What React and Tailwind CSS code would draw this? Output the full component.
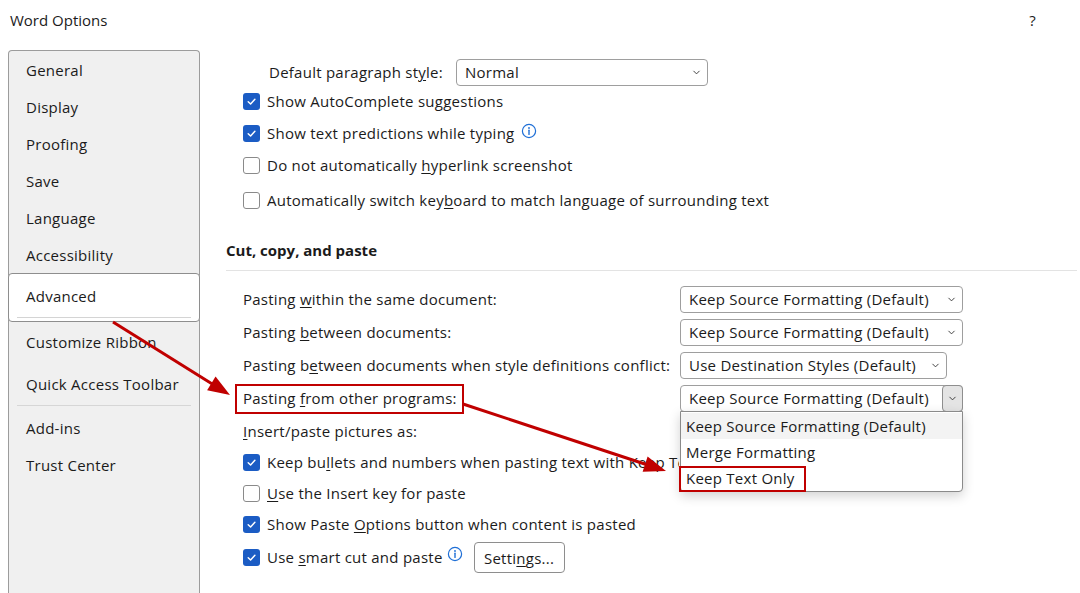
import React from "react";
import { ChevronDown } from "lucide-react";

const U = ({ children }) => (
  <span className="underline decoration-1 underline-offset-[2px]">{children}</span>
);

function Check({ checked }) {
  return checked ? (
    <span className="flex h-[17px] w-[17px] shrink-0 items-center justify-center rounded-[3px] bg-[#1b5cc4]">
      <svg width="11" height="11" viewBox="0 0 12 12">
        <path d="M2.4 6.3 L5 8.7 L9.7 3.6" fill="none" stroke="white" strokeWidth="1.6" strokeLinecap="round" strokeLinejoin="round" />
      </svg>
    </span>
  ) : (
    <span className="h-[17px] w-[17px] shrink-0 rounded-[3px] border border-[#8a8a8a] bg-white" />
  );
}

function Info() {
  return (
    <svg width="16" height="16" viewBox="0 0 16 16" className="shrink-0">
      <circle cx="8" cy="8" r="6.6" fill="none" stroke="#1f6fd6" strokeWidth="1.2" />
      <circle cx="8" cy="5" r="0.9" fill="#1f6fd6" />
      <path d="M8 7.2 V11.4" stroke="#1f6fd6" strokeWidth="1.4" strokeLinecap="round" />
    </svg>
  );
}

function CheckRow({ checked, children, className }) {
  return (
    <div className={`flex items-center gap-[7px] whitespace-nowrap ${className}`}>
      <Check checked={checked} />
      <span>{children}</span>
    </div>
  );
}

function Select({ widthClass, text, active }) {
  return (
    <div className={`flex h-[27px] ${widthClass} items-center justify-between rounded-[4px] border border-[#9e9e9e] bg-white pl-[8px]`}>
      <span className="whitespace-nowrap">{text}</span>
      {active ? (
        <span className="mr-[-1px] flex h-[27px] w-[21px] items-center justify-center rounded-[4px] border border-[#8e8e8e] bg-[#e4e4e4]">
          <ChevronDown size={11} strokeWidth={2} color="#333" />
        </span>
      ) : (
        <span className="flex w-[22px] items-center justify-center">
          <ChevronDown size={11} strokeWidth={2} color="#333" />
        </span>
      )}
    </div>
  );
}

function arrow(x1, y1, x2, y2) {
  const dx = x2 - x1;
  const dy = y2 - y1;
  const len = Math.hypot(dx, dy);
  const ux = dx / len;
  const uy = dy / len;
  const hl = 22;
  const hw = 8;
  const bx = x2 - ux * hl;
  const by = y2 - uy * hl;
  const px = -uy;
  const py = ux;
  return {
    line: [x1, y1, bx + ux * 2, by + uy * 2],
    pts: `${x2},${y2} ${bx + px * hw},${by + py * hw} ${bx - px * hw},${by - py * hw}`,
  };
}

const NavItem = ({ children }) => (
  <div className="flex h-[37px] items-center pl-[17px]">{children}</div>
);

export default function App() {
  const a1 = arrow(113, 322, 230, 395);
  const a2 = arrow(463, 404, 666, 471);
  return (
    <div className="relative h-[593px] w-[1080px] overflow-hidden bg-white font-['Open_Sans',sans-serif] text-[15px] tracking-[0.25px] text-[#1b1b1b]">
      {/* title bar */}
      <div className="flex h-[40px] items-center justify-between pl-[10px] pr-[44px]">
        <span className="text-[15px] tracking-normal">Word Options</span>
        <span className="text-[15px]">?</span>
      </div>

      <div className="mt-[10px] flex">
        {/* nav */}
        <div className="ml-[8px] h-[560px] w-[192px] shrink-0 rounded-t-[4px] border border-b-0 border-[#9c9c9c] bg-[#f0f0f0] pt-[1px]">
          <NavItem>General</NavItem>
          <NavItem>Display</NavItem>
          <NavItem>Proofing</NavItem>
          <NavItem>Save</NavItem>
          <NavItem>Language</NavItem>
          <NavItem>Accessibility</NavItem>
          <div className="-mx-[1px] -mt-[1px] flex h-[49px] flex-col rounded-[4px] border border-[#8e8e8e] bg-white">
            <div className="flex flex-1 items-center pl-[17px] pt-[1px]">Advanced</div>
            <div className="mx-[8px] mb-[3px] h-px bg-[#d4d4d4]" />
          </div>
          <div className="flex h-[41px] items-center pl-[17px]">Customize Ribbon</div>
          <div className="flex h-[42px] items-center pl-[17px]">Quick Access Toolbar</div>
          <div className="mx-[8px] h-px bg-[#d6d6d6]" />
          <div className="mt-[4px]">
            <NavItem>Add-ins</NavItem>
            <NavItem>Trust Center</NavItem>
          </div>
        </div>

        {/* content */}
        <div className="flex flex-1 flex-col pl-[26px]">
          <div className="mt-[9px] flex h-[26px] items-center pl-[43px]">
            <span className="w-[187px] whitespace-nowrap">
              Default paragraph st<U>y</U>le:
            </span>
            <div className="flex h-[27px] w-[252px] items-center justify-between rounded-[4px] border border-[#9e9e9e] bg-white pl-[8px]">
              <span>Normal</span>
              <span className="flex w-[22px] items-center justify-center">
                <ChevronDown size={11} strokeWidth={2} color="#333" />
              </span>
            </div>
          </div>
          <div className="pl-[17px]">
            <CheckRow checked className="h-[32px]">Show AutoComplete suggestions</CheckRow>
            <div className="flex h-[32px] items-center gap-[7px] whitespace-nowrap">
              <Check checked />
              <span>Show text predictions while typing</span>
              <span className="-ml-[1px] -mt-[4px]">
                <Info />
              </span>
            </div>
            <CheckRow className="h-[32px]">
              Do not automatically <U>h</U>yperlink screenshot
            </CheckRow>
            <CheckRow className="h-[38px]">
              Automatically switch key<U>b</U>oard to match language of surrounding text
            </CheckRow>
          </div>

          <div className="mt-[18px] flex h-[26px] items-center font-bold tracking-normal">Cut, copy, and paste</div>
          <div className="mr-[3px] mt-[7px] h-px bg-[#e3e3e3]" />

          <div className="mt-[12px] pl-[17px]">
            <div className="flex h-[33px] items-center">
              <span className="w-[437px] whitespace-nowrap">
                Pasting <U>w</U>ithin the same document:
              </span>
              <Select widthClass="w-[283px]" text="Keep Source Formatting (Default)" />
            </div>
            <div className="flex h-[33px] items-center">
              <span className="w-[437px] whitespace-nowrap">
                Pasting <U>b</U>etween documents:
              </span>
              <Select widthClass="w-[283px]" text="Keep Source Formatting (Default)" />
            </div>
            <div className="flex h-[33px] items-center">
              <span className="w-[437px] whitespace-nowrap">
                Pasting b<U>e</U>tween documents when style definitions conflict:
              </span>
              <Select widthClass="w-[267px]" text="Use Destination Styles (Default)" />
            </div>
            <div className="flex h-[33px] items-center">
              <span className="w-[437px] whitespace-nowrap">
                <span className="relative">
                  Pasting <U>f</U>rom other programs:
                  <span className="absolute -bottom-[6px] -left-[8px] -right-[7px] -top-[4px] border-[2.5px] border-[#c00000]" />
                </span>
              </span>
              <Select widthClass="w-[283px]" text="Keep Source Formatting (Default)" active />
            </div>
            <div className="flex h-[32px] items-center whitespace-nowrap">
              <span>
                <U>I</U>nsert/paste pictures as:
              </span>
            </div>
            <div className="flex h-[30px] items-center gap-[7px] whitespace-nowrap">
              <Check checked />
              <span className="max-w-[412px] overflow-hidden">
                Keep bu<U>l</U>lets and numbers when pasting text with Keep Text Only option
              </span>
            </div>
            <CheckRow className="h-[32px]">
              <U>U</U>se the Insert key for paste
            </CheckRow>
            <CheckRow checked className="h-[30px]">
              Show Paste <U>O</U>ptions button when content is pasted
            </CheckRow>
            <div className="flex h-[36px] items-center gap-[7px] whitespace-nowrap">
              <Check checked />
              <span>
                Use <U>s</U>mart cut and paste
              </span>
              <span className="-ml-[3px] -mt-[6px]">
                <Info />
              </span>
              <div className="ml-[4px] flex h-[31px] w-[91px] items-center justify-center rounded-[4px] border border-[#8e8e8e] bg-white pt-[2px]">
                Setti<U>n</U>gs...
              </div>
            </div>
          </div>
        </div>
      </div>

      {/* dropdown list overlay */}
      <div className="absolute left-[680px] top-[411px] flex h-[81px] w-[283px] flex-col rounded-b-[4px] border border-[#8a8a8a] bg-white pt-[1px] shadow-[0_4px_12px_rgba(0,0,0,0.18)]">
        <div className="flex h-[26px] items-center whitespace-nowrap bg-[#f3f3f3] pl-[5px]">Keep Source Formatting (Default)</div>
        <div className="flex h-[26px] items-center pl-[5px]">Merge Formatting</div>
        <div className="flex h-[26px] items-center pl-[5px]">Keep Text Only</div>
      </div>
      <div className="absolute left-[679px] top-[466px] h-[26px] w-[127px] border-[2.5px] border-[#c00000]" />

      {/* arrows */}
      <svg className="pointer-events-none absolute inset-0" width="1080" height="593">
        <line x1={a1.line[0]} y1={a1.line[1]} x2={a1.line[2]} y2={a1.line[3]} stroke="#c00000" strokeWidth="3" />
        <polygon points={a1.pts} fill="#c00000" />
        <line x1={a2.line[0]} y1={a2.line[1]} x2={a2.line[2]} y2={a2.line[3]} stroke="#c00000" strokeWidth="3" />
        <polygon points={a2.pts} fill="#c00000" />
      </svg>
    </div>
  );
}
